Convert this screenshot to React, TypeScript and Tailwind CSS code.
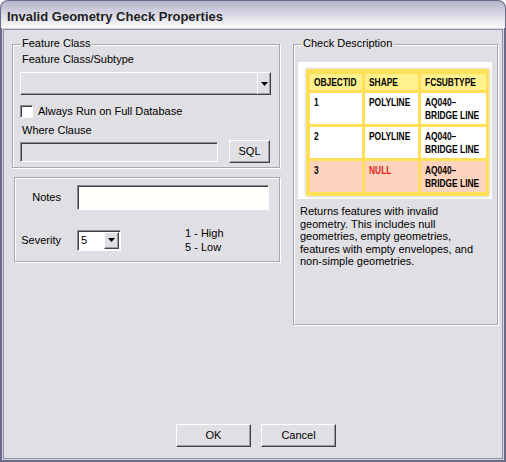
import React from 'react';

const raised =
  'border border-t-white border-l-white border-r-[#404040] border-b-[#404040] shadow-[inset_-1px_-1px_0_#9d9da1]';
const sunken =
  'border border-t-[#8a8a92] border-l-[#8a8a92] border-r-white border-b-white shadow-[inset_1px_1px_0_#404040]';
const group =
  'relative border border-[#a8a7b2] shadow-[inset_1px_1px_0_#fff,1px_1px_0_#fff]';

function Legend({ children }: { children: React.ReactNode }) {
  return (
    <span className="absolute left-[7px] top-[-8px] bg-[#e0dfe3] px-[2px] leading-[13px]">
      {children}
    </span>
  );
}

function ArrowDown() {
  return (
    <svg width="7" height="4" viewBox="0 0 7 4">
      <path d="M0 0h7L3.5 4z" fill="#000" />
    </svg>
  );
}

function Cell({
  children,
  bg = 'bg-white',
  red = false,
}: {
  children: React.ReactNode;
  bg?: string;
  red?: boolean;
}) {
  return (
    <div className={`${bg} flex flex-col justify-start pl-[4px] pt-[3px]`}>
      <span
        className={`block origin-left scale-x-[0.8] whitespace-nowrap text-[10.5px] font-bold leading-[13px] ${
          red ? 'text-[#e3221c]' : 'text-black'
        }`}
      >
        {children}
      </span>
    </div>
  );
}

function Head({ children }: { children: React.ReactNode }) {
  return (
    <div className="bg-[#fff18c] pl-[4px]">
      <span className="block origin-left scale-x-[0.8] whitespace-nowrap text-[10.5px] font-bold leading-[16px]">
        {children}
      </span>
    </div>
  );
}

function Table() {
  return (
    <div className="h-[127px] w-[183px] bg-[#ffdf57] pl-[4px] pt-[5px] shadow-[0_0_3px_rgba(0,0,0,0.25)]">
      <div className="grid grid-cols-[52px_53px_65px] grid-rows-[16px_31px_31px_31px] gap-[3px]">
        <Head>OBJECTID</Head>
        <Head>SHAPE</Head>
        <Head>FCSUBTYPE</Head>
        <Cell>1</Cell>
        <Cell>POLYLINE</Cell>
        <Cell>
          AQ040–
          <br />
          BRIDGE LINE
        </Cell>
        <Cell>2</Cell>
        <Cell>POLYLINE</Cell>
        <Cell>
          AQ040–
          <br />
          BRIDGE LINE
        </Cell>
        <Cell bg="bg-[#fcd3bc]">3</Cell>
        <Cell bg="bg-[#fcd3bc]" red>
          NULL
        </Cell>
        <Cell bg="bg-[#fcd3bc]">
          AQ040–
          <br />
          BRIDGE LINE
        </Cell>
      </div>
    </div>
  );
}

export default function App() {
  return (
    <div className="flex h-[462px] w-[506px] flex-col font-['Liberation_Sans',Arial,sans-serif] text-[11px] text-black">
      {/* title bar */}
      <div className="h-[28px] shrink-0 rounded-t-[8px] border-x border-t border-[#6b6a8a] bg-linear-to-b from-[#b4b3cb] via-[#d9d9e5] to-[#fbfbfd] pl-[6px] pt-[8px]">
        <span className="text-[13px] font-bold leading-[16px] text-[#222]">
          Invalid Geometry Check Properties
        </span>
      </div>

      <div className="flex min-h-0 flex-1 flex-col border-x-2 border-b-2 border-[#6b6a8a]">
        <div className="flex min-h-0 flex-1 flex-col border border-[#d6d5e2]">
          <div className="flex min-h-0 flex-1 flex-col border border-[#8f8ea9] bg-[#e0dfe3] pl-[8px] pt-[14px] pb-[11px]">
            <div className="flex">
              {/* left column */}
              <div className="flex w-[268px] flex-col">
                <div className={`${group} h-[124px] pl-[7px] pt-[8px]`}>
                  <Legend>Feature Class</Legend>
                  <div className="pl-[2px] leading-[13px]">Feature Class/Subtype</div>
                  <div className={`${raised} mt-[6px] flex h-[23px] w-[251px] bg-[#e0dfe3]`}>
                    <div className="flex-1" />
                    <div className="flex w-[13px] items-center justify-center border-l border-white">
                      <ArrowDown />
                    </div>
                  </div>
                  <div className="mt-[10px] flex items-center">
                    <div className={`${sunken} h-[13px] w-[13px] bg-white`} />
                    <span className="ml-[5px] leading-[13px]">Always Run on Full Database</span>
                  </div>
                  <div className="mt-[6px] pl-[2px] leading-[13px]">Where Clause</div>
                  <div className="mt-[3px] flex items-center">
                    <div className={`${sunken} h-[20px] w-[198px] bg-[#e0dfe3]`} />
                    <button className={`${raised} ml-[11px] h-[23px] w-[41px] bg-[#e0dfe3] text-[11px] leading-none`}>
                      SQL
                    </button>
                  </div>
                </div>

                <div className={`${group} ml-[2px] mt-[9px] h-[85px] w-[266px] pt-[7px]`}>
                  <div className="flex items-center">
                    <span className="w-[46px] text-right">Notes</span>
                    <div className={`${sunken} ml-[16px] h-[25px] w-[192px] bg-[#fffffb]`} />
                  </div>
                  <div className="mt-[16px] flex items-center">
                    <span className="w-[46px] text-right">Severity</span>
                    <div className={`${sunken} ml-[16px] flex h-[21px] w-[44px] items-center bg-white`}>
                      <span className="ml-[3px] flex-1">5</span>
                      <div className={`${raised} mr-[1px] flex h-[17px] w-[15px] items-center justify-center bg-[#e0dfe3]`}>
                        <ArrowDown />
                      </div>
                    </div>
                    <div className="ml-[64px] flex flex-col leading-[14px]">
                      <span>1 - High</span>
                      <span>5 - Low</span>
                    </div>
                  </div>
                </div>
              </div>

              {/* right column */}
              <div className={`${group} ml-[13px] h-[281px] w-[205px] pl-[4px] pt-[17px]`}>
                <Legend>Check Description</Legend>
                <div className="h-[137px] w-[194px] bg-white pl-[8px] pt-[7px]">
                  <Table />
                </div>
                <div className="mt-[6px] pl-[2px] leading-[12.5px]">
                  Returns features with invalid
                  <br />
                  geometry. This includes null
                  <br />
                  geometries, empty geometries,
                  <br />
                  features with empty envelopes, and
                  <br />
                  non-simple geometries.
                </div>
              </div>
            </div>

            <div className="flex-1" />
            <div className="flex gap-[10px] pl-[164px]">
              <button className={`${raised} h-[23px] w-[75px] bg-[#e0dfe3] text-[11px]`}>OK</button>
              <button className={`${raised} h-[23px] w-[75px] bg-[#e0dfe3] text-[11px]`}>Cancel</button>
            </div>
          </div>
        </div>
      </div>
    </div>
  );
}
